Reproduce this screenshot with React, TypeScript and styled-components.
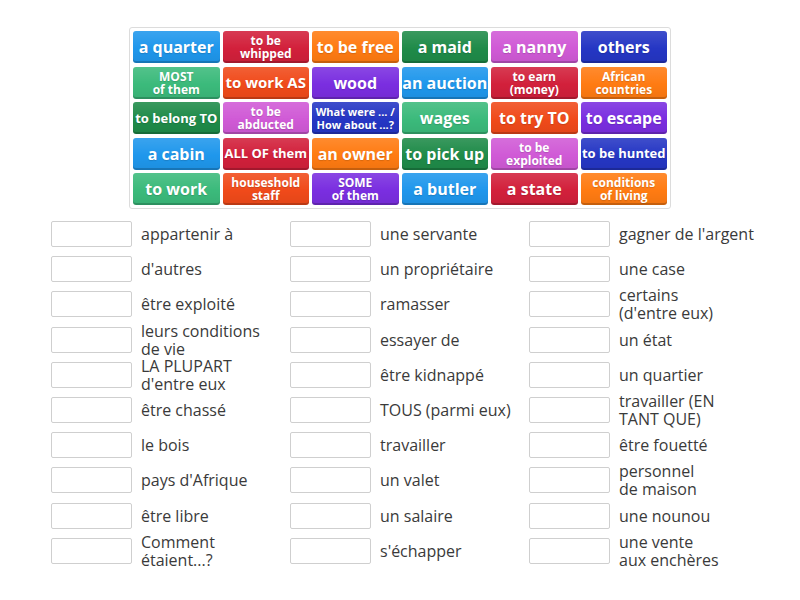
import React from 'react';
import styled, { createGlobalStyle } from 'styled-components';

type Tone = 'blue' | 'crimson' | 'orange' | 'forest' | 'orchid' | 'navy' | 'green' | 'flame' | 'purple';

const tones: Record<Tone, string> = {
  blue: '#1f97ec',
  crimson: '#d2203b',
  orange: '#ff7b12',
  forest: '#1f8b49',
  orchid: '#d05ad6',
  navy: '#2536c4',
  green: '#3bba7b',
  flame: '#f04a1a',
  purple: '#7a2ee0',
};

interface Tile {
  text: string[];
  tone: Tone;
  size?: number;
}

const tiles: Tile[] = [
  { text: ['a quarter'], tone: 'blue' },
  { text: ['to be', 'whipped'], tone: 'crimson' },
  { text: ['to be free'], tone: 'orange' },
  { text: ['a maid'], tone: 'forest' },
  { text: ['a nanny'], tone: 'orchid' },
  { text: ['others'], tone: 'navy' },

  { text: ['MOST', 'of them'], tone: 'green' },
  { text: ['to work AS'], tone: 'flame', size: 15 },
  { text: ['wood'], tone: 'purple' },
  { text: ['an auction'], tone: 'blue' },
  { text: ['to earn', '(money)'], tone: 'crimson' },
  { text: ['African', 'countries'], tone: 'orange' },

  { text: ['to belong TO'], tone: 'forest', size: 13 },
  { text: ['to be', 'abducted'], tone: 'orchid' },
  { text: ['What were ... /', 'How about ...?'], tone: 'navy', size: 11 },
  { text: ['wages'], tone: 'green' },
  { text: ['to try TO'], tone: 'flame' },
  { text: ['to escape'], tone: 'purple' },

  { text: ['a cabin'], tone: 'blue' },
  { text: ['ALL OF them'], tone: 'crimson', size: 13 },
  { text: ['an owner'], tone: 'orange' },
  { text: ['to pick up'], tone: 'forest' },
  { text: ['to be', 'exploited'], tone: 'orchid' },
  { text: ['to be hunted'], tone: 'navy', size: 13 },

  { text: ['to work'], tone: 'green' },
  { text: ['houseshold', 'staff'], tone: 'flame' },
  { text: ['SOME', 'of them'], tone: 'purple' },
  { text: ['a butler'], tone: 'blue' },
  { text: ['a state'], tone: 'crimson' },
  { text: ['conditions', 'of living'], tone: 'orange' },
];

const columns: string[][][] = [
  [
    ['appartenir à'],
    ["d'autres"],
    ['être exploité'],
    ['leurs conditions', 'de vie'],
    ['LA PLUPART', "d'entre eux"],
    ['être chassé'],
    ['le bois'],
    ["pays d'Afrique"],
    ['être libre'],
    ['Comment', 'étaient...?'],
  ],
  [
    ['une servante'],
    ['un propriétaire'],
    ['ramasser'],
    ['essayer de'],
    ['être kidnappé'],
    ['TOUS (parmi eux)'],
    ['travailler'],
    ['un valet'],
    ['un salaire'],
    ["s'échapper"],
  ],
  [
    ["gagner de l'argent"],
    ['une case'],
    ['certains', "(d'entre eux)"],
    ['un état'],
    ['un quartier'],
    ['travailler (EN', 'TANT QUE)'],
    ['être fouetté'],
    ['personnel', 'de maison'],
    ['une nounou'],
    ['une vente', 'aux enchères'],
  ],
];

function App() {
  return (
    <Page>
      <GlobalStyle />
      <Board>
        {tiles.map((tile, index) => (
          <Card key={index} tone={tile.tone} size={tile.size ?? (tile.text.length > 1 ? 12 : 16)}>
            {tile.text.map((line, i) => (
              <Line key={i}>{line}</Line>
            ))}
          </Card>
        ))}
      </Board>
      <Targets>
        {columns.map((col, c) => (
          <Column key={c}>
            {col.map((label, r) => (
              <Row key={r}>
                <Slot />
                <Label>
                  {label.map((line, i) => (
                    <span key={i}>{line}</span>
                  ))}
                </Label>
              </Row>
            ))}
          </Column>
        ))}
      </Targets>
    </Page>
  );
}

const GlobalStyle = createGlobalStyle`
  body {
    margin: 0;
    background: #fff;
    font-family: 'Open Sans', 'Liberation Sans', sans-serif;
  }
`;

const Page = styled.div`
  width: 800px;
  height: 600px;
  padding-top: 27px;
  box-sizing: border-box;
  overflow: hidden;
`;

const Board = styled.div`
  width: 542px;
  box-sizing: border-box;
  margin: 0 auto;
  padding: 3px;
  border: 1px solid #dcdcdc;
  border-radius: 3px;
  display: grid;
  grid-template-columns: repeat(6, 1fr);
  grid-auto-rows: 32px;
  gap: 3.5px 3px;
`;

const Card = styled.div<{ tone: Tone; size: number }>`
  display: flex;
  flex-direction: column;
  align-items: center;
  justify-content: center;
  border-radius: 3px;
  background: linear-gradient(
      to bottom,
      rgba(255, 255, 255, 0.12),
      rgba(255, 255, 255, 0) 55%,
      rgba(0, 0, 0, 0.06)
    ),
    ${({ tone }) => tones[tone]};
  box-shadow: inset 0 -2px 0 rgba(0, 0, 0, 0.18);
  color: #fff;
  font-weight: 700;
  font-size: ${({ size }) => size}px;
  line-height: ${({ size }) => (size <= 12 ? 13 : size + 4)}px;
  text-shadow: 0 1px 1px rgba(0, 0, 0, 0.15);
  white-space: nowrap;
`;

const Line = styled.span`
  display: block;
`;

const Targets = styled.div`
  margin: 12px 0 0 51px;
  display: grid;
  grid-template-columns: repeat(3, 239px);
`;

const Column = styled.div`
  display: flex;
  flex-direction: column;
  gap: 9.2px;
`;

const Row = styled.div`
  display: flex;
  align-items: center;
  gap: 9px;
  height: 26px;
`;

const Slot = styled.div`
  width: 81px;
  height: 26px;
  box-sizing: border-box;
  border: 1px solid #cfcfcf;
  border-radius: 2px;
  flex-shrink: 0;
`;

const Label = styled.div`
  display: flex;
  flex-direction: column;
  color: #3a3a3a;
  font-size: 16px;
  line-height: 18px;
  white-space: nowrap;
`;

export default App;
